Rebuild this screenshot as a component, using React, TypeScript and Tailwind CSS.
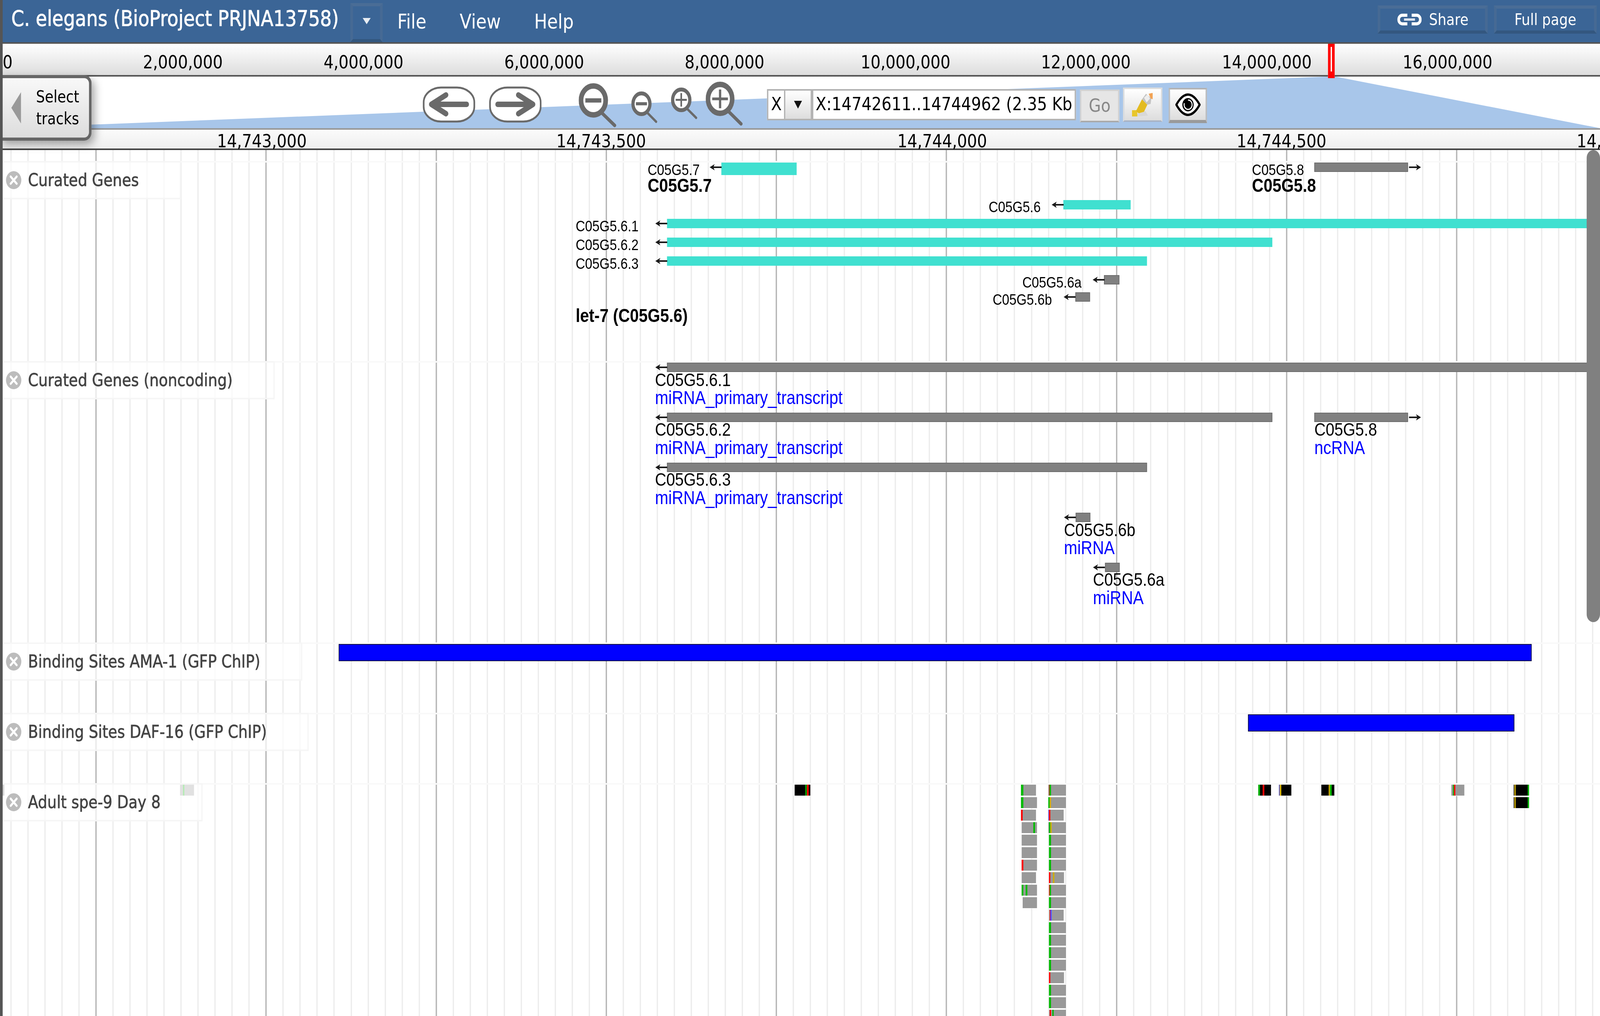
const GRID = Array.from({ length: 94 }, (_, i) => ({ x: 31 + 51.025 * i, major: (i - 5) % 10 === 0 }));

const OVERVIEW = [
  ['0', 8], ['2,000,000', 429], ['4,000,000', 971], ['6,000,000', 1513], ['8,000,000', 2054],
  ['10,000,000', 2582], ['12,000,000', 3123], ['14,000,000', 3666], ['16,000,000', 4208],
] as const;

const DETAIL = [
  ['14,743,000', 651], ['14,743,500', 1669], ['14,744,000', 2692], ['14,744,500', 3710], ['14,745,000', 4730],
] as const;

type Bar = { x: number; y: number; w: number; h: number; kind: 'teal' | 'gray' | 'blue' };
type Arrow = { x: number; y: number; right?: boolean };
type Label = { t: string; x: number; b: number; kind: 'small' | 'bold' | 'name' | 'type' };
type Read = { x: number; y: number; w: number; bg?: string; marks?: [number, number, string][] };

const BAR_CLASS = {
  teal: 'bg-[#40e0d0]',
  gray: 'bg-[#808080] border-2 border-[#6c6c6c]',
  blue: 'bg-[#0000ff] border-2 border-[#101040]',
};

const LABEL_CLASS = {
  small: 'text-[39px] text-black',
  bold: 'text-[48px] font-bold text-black',
  name: 'text-[47px] text-black',
  type: 'text-[48px] text-[#0000ff]',
};
const LABEL_SIZE = { small: 39, bold: 48, name: 47, type: 48 };

const GENE_BARS: Bar[] = [
  { x: 2164, y: 416, w: 226, h: 32, kind: 'teal' },
  { x: 3190, y: 512, w: 202, h: 24, kind: 'teal' },
  { x: 2001, y: 560, w: 2799, h: 24, kind: 'teal' },
  { x: 2001, y: 608, w: 1816, h: 24, kind: 'teal' },
  { x: 2001, y: 656, w: 1440, h: 24, kind: 'teal' },
  { x: 3312, y: 704, w: 46, h: 24, kind: 'gray' },
  { x: 3226, y: 748, w: 44, h: 24, kind: 'gray' },
  { x: 3943, y: 416, w: 281, h: 24, kind: 'gray' },
];
const GENE_ARROWS: Arrow[] = [
  { x: 2129, y: 428 }, { x: 3155, y: 524 }, { x: 1966, y: 572 }, { x: 1966, y: 620 }, { x: 1966, y: 668 },
  { x: 3278, y: 716 }, { x: 3191, y: 760 }, { x: 4227, y: 428, right: true },
];
const GENE_LABELS: Label[] = [
  { t: 'C05G5.7', x: 1943, b: 448, kind: 'small' },
  { t: 'C05G5.7', x: 1943, b: 492, kind: 'bold' },
  { t: 'C05G5.8', x: 3756, b: 448, kind: 'small' },
  { t: 'C05G5.8', x: 3756, b: 492, kind: 'bold' },
  { t: 'C05G5.6', x: 2966, b: 543, kind: 'small' },
  { t: 'C05G5.6.1', x: 1727, b: 592, kind: 'small' },
  { t: 'C05G5.6.2', x: 1727, b: 640, kind: 'small' },
  { t: 'C05G5.6.3', x: 1727, b: 688, kind: 'small' },
  { t: 'C05G5.6a', x: 3067, b: 736, kind: 'small' },
  { t: 'C05G5.6b', x: 2978, b: 780, kind: 'small' },
  { t: 'let-7 (C05G5.6)', x: 1727, b: 825, kind: 'bold' },
];

const NC_BARS: Bar[] = [
  { x: 2001, y: 928, w: 2799, h: 24, kind: 'gray' },
  { x: 2001, y: 1056, w: 1816, h: 24, kind: 'gray' },
  { x: 2001, y: 1184, w: 1440, h: 24, kind: 'gray' },
  { x: 3943, y: 1056, w: 281, h: 24, kind: 'gray' },
  { x: 3227, y: 1312, w: 44, h: 24, kind: 'gray' },
  { x: 3315, y: 1440, w: 44, h: 24, kind: 'gray' },
];
const NC_ARROWS: Arrow[] = [
  { x: 1966, y: 940 }, { x: 1966, y: 1068 }, { x: 1966, y: 1196 }, { x: 4227, y: 1068, right: true },
  { x: 3192, y: 1324 }, { x: 3279, y: 1452 },
];
const NC_LABELS: Label[] = [
  { t: 'C05G5.6.1', x: 1965, b: 988, kind: 'name' },
  { t: 'miRNA_primary_transcript', x: 1965, b: 1035, kind: 'type' },
  { t: 'C05G5.6.2', x: 1965, b: 1115, kind: 'name' },
  { t: 'miRNA_primary_transcript', x: 1965, b: 1163, kind: 'type' },
  { t: 'C05G5.6.3', x: 1965, b: 1243, kind: 'name' },
  { t: 'miRNA_primary_transcript', x: 1965, b: 1291, kind: 'type' },
  { t: 'C05G5.8', x: 3943, b: 1115, kind: 'name' },
  { t: 'ncRNA', x: 3943, b: 1163, kind: 'type' },
  { t: 'C05G5.6b', x: 3192, b: 1372, kind: 'name' },
  { t: 'miRNA', x: 3192, b: 1419, kind: 'type' },
  { t: 'C05G5.6a', x: 3279, b: 1499, kind: 'name' },
  { t: 'miRNA', x: 3279, b: 1547, kind: 'type' },
];

const G = '#00bb00';
const R = '#ff0000';
const Y = '#d2b000';
const B = '#5050ff';
const DR = '#b83000';
const BLACK = '#000000';

const rowY = (n: number) => 2008 + 32 * n;

const READS: Read[] = [
  // left edge + under the label
  { x: 0, y: rowY(0), w: 13, bg: '#777777' },
  { x: 540, y: rowY(0), w: 42, marks: [[549, 553, G]] },
  // top row, black reads
  { x: 2384, y: rowY(0), w: 47, bg: BLACK, marks: [[2416, 2420, G], [2421, 2426, R]] },
  { x: 3775, y: rowY(0), w: 38, bg: BLACK, marks: [[3775, 3780, G], [3788, 3793, R]] },
  { x: 3837, y: rowY(0), w: 37, bg: BLACK, marks: [[3837, 3839, B], [3839, 3844, Y]] },
  { x: 3964, y: rowY(0), w: 39, bg: BLACK, marks: [[3986, 3990, Y], [3990, 3995, G]] },
  { x: 4354, y: rowY(0), w: 39, marks: [[4359, 4362, G], [4362, 4366, R]] },
  { x: 4541, y: rowY(0), w: 46, bg: BLACK, marks: [[4543, 4547, Y], [4583, 4587, G]] },
  { x: 4541, y: rowY(1), w: 46, bg: BLACK, marks: [[4543, 4547, Y], [4583, 4587, G]] },
  // left stack
  { x: 3063, y: rowY(0), w: 45, marks: [[3063, 3070, G]] },
  { x: 3063, y: rowY(1), w: 48, marks: [[3063, 3070, G]] },
  { x: 3063, y: rowY(2), w: 45, marks: [[3063, 3068, R]] },
  { x: 3065, y: rowY(3), w: 46, marks: [[3100, 3105, G]] },
  { x: 3065, y: rowY(4), w: 46 },
  { x: 3065, y: rowY(5), w: 46 },
  { x: 3065, y: rowY(6), w: 46, marks: [[3065, 3070, R]] },
  { x: 3065, y: rowY(7), w: 43 },
  { x: 3065, y: rowY(8), w: 46, marks: [[3065, 3070, G], [3077, 3082, G]] },
  { x: 3068, y: rowY(9), w: 43 },
  // right stack
  { x: 3145, y: rowY(0), w: 53, marks: [[3147, 3149, DR], [3149, 3153, G]] },
  { x: 3145, y: rowY(1), w: 53, marks: [[3145, 3149, G], [3149, 3153, Y]] },
  { x: 3145, y: rowY(2), w: 46, marks: [[3145, 3147, B], [3147, 3151, R]] },
  { x: 3145, y: rowY(3), w: 53, marks: [[3147, 3151, G], [3151, 3155, Y]] },
  { x: 3147, y: rowY(4), w: 51, marks: [[3147, 3153, G]] },
  { x: 3147, y: rowY(5), w: 51, marks: [[3147, 3153, G]] },
  { x: 3147, y: rowY(6), w: 51, marks: [[3147, 3153, G]] },
  { x: 3147, y: rowY(7), w: 45, marks: [[3147, 3151, R], [3159, 3163, Y]] },
  { x: 3147, y: rowY(8), w: 51, marks: [[3147, 3149, R], [3149, 3153, G]] },
  { x: 3147, y: rowY(9), w: 51, marks: [[3147, 3153, G]] },
  { x: 3147, y: rowY(10), w: 44, marks: [[3149, 3151, R], [3151, 3155, B]] },
  { x: 3147, y: rowY(11), w: 51, marks: [[3147, 3153, G]] },
  { x: 3147, y: rowY(12), w: 51, marks: [[3147, 3153, G]] },
  { x: 3147, y: rowY(13), w: 51, marks: [[3147, 3153, G]] },
  { x: 3147, y: rowY(14), w: 51, marks: [[3147, 3153, G]] },
  { x: 3147, y: rowY(15), w: 45, marks: [[3147, 3151, R]] },
  { x: 3147, y: rowY(16), w: 51, marks: [[3147, 3153, G]] },
  { x: 3147, y: rowY(17), w: 51, marks: [[3147, 3153, G]] },
  { x: 3147, y: rowY(18), w: 51, marks: [[3149, 3153, R], [3157, 3161, G]] },
];

function StrandArrow({ a, top }: { a: Arrow; top: number }) {
  return (
    <svg
      viewBox="0 0 36 20"
      className={`absolute w-[36px] h-[20px] blur-[0.6px] ${a.right ? '-scale-x-100' : ''}`}
      style={{ left: a.x, top: a.y - top - 10 }}
    >
      <path d="M0 10 L15 2 L12 8 H36 V12 H12 L15 18 Z" fill="#1a1a1a" />
    </svg>
  );
}

function Feature({ bars, arrows, labels, top }: { bars: Bar[]; arrows: Arrow[]; labels: Label[]; top: number }) {
  return (
    <>
      {bars.map((b, i) => (
        <div
          key={i}
          className={`absolute ${BAR_CLASS[b.kind]}`}
          style={{ left: b.x, top: b.y - top, width: b.w, height: b.h }}
        />
      ))}
      {arrows.map((a, i) => <StrandArrow key={i} a={a} top={top} />)}
      {labels.map((l, i) => (
        <span
          key={i}
          className={`absolute leading-none whitespace-nowrap font-['Liberation_Sans',sans-serif] blur-[0.4px] ${LABEL_CLASS[l.kind]}`}
          style={{ left: l.x, top: l.b - top - LABEL_SIZE[l.kind] * 0.8465 }}
        >
          {l.t}
        </span>
      ))}
    </>
  );
}

function CloseIcon() {
  return (
    <svg viewBox="0 0 48 48" className="w-12 h-12 shrink-0">
      <circle cx="24" cy="24" r="23" fill="#bcbcbc" />
      <path d="M15 15 L33 33 M33 15 L15 33" stroke="#fff" strokeWidth="6" strokeLinecap="round" />
    </svg>
  );
}

function Track({ title, height, children }: { title: string; height?: string; children?: React.ReactNode }) {
  return (
    <div className={`relative border-t-4 border-[#f9f9f9] ${height ?? ''}`}>
      {children}
      <div className="absolute left-0 top-[-4px] z-10 h-[98px] flex items-center pl-[17px] pr-[122px] bg-white/70 border-4 border-l-0 border-[#f4f4f4]/80">
        <CloseIcon />
        <span className="ml-[19px] text-[44.5px] leading-none whitespace-nowrap text-[#444] [-webkit-text-stroke:0.9px_#444]">
          {title}
        </span>
      </div>
    </div>
  );
}

function NavButton({ right, className }: { right?: boolean; className: string }) {
  return (
    <svg viewBox="0 0 158 93" preserveAspectRatio="none" className={`w-[158px] h-[93px] shrink-0 ${right ? '-scale-x-100' : ''} ${className}`}>
      <rect x="3" y="3" width="152" height="87" rx="52" ry="38" fill="#fff" stroke="#6a6a6a" strokeWidth="5" />
      <path d="M26 46 H132 M26 46 L70 22 M26 46 L70 70" fill="none" stroke="#6a6a6a" strokeWidth="14" strokeLinecap="round" strokeLinejoin="round" />
    </svg>
  );
}

function Magnifier({ plus, className }: { plus?: boolean; className: string }) {
  return (
    <svg viewBox="0 0 116 113" preserveAspectRatio="none" className={`shrink-0 ${className}`}>
      <path d="M72 78 L108 108" stroke="#6a6a6a" strokeWidth="9" strokeLinecap="round" />
      <circle cx="44" cy="44" r="37" fill="#fff" stroke="#6a6a6a" strokeWidth="14" />
      <path d={plus ? 'M20 44 H68 M44 20 V68' : 'M20 44 H68'} stroke="#6a6a6a" strokeWidth={plus ? 7 : 11} />
    </svg>
  );
}

function LinkIcon() {
  return (
    <svg viewBox="0 0 73 30" className="w-[73px] h-[30px] shrink-0 blur-[0.5px]">
      <path
        d="M30 4 H15 a11 11 0 0 0 0 22 H30 M43 4 H58 a11 11 0 0 1 0 22 H43"
        fill="none"
        stroke="#fff"
        strokeWidth="8"
      />
      <path d="M20 15 H53" stroke="#dbe3ee" strokeWidth="6" />
    </svg>
  );
}

const BEVEL = 'border-8 border-t-[#4a6d96] border-l-[#466a94] border-r-[#466a94] border-b-[#33577f] bg-[#3b6596]';

export default function App() {
  // the layout is drawn in 4800 wide coordinates; narrower windows squeeze it instead of cutting it off
  const fit = Math.min(1, window.innerWidth / 4800);

  return (
    <div className="w-full h-[2600px] overflow-hidden">
      <div
        className="relative w-[4800px] h-[2600px] origin-top-left overflow-hidden bg-white flex flex-col font-['DejaVu_Sans',sans-serif]"
        style={{ transform: `scaleX(${fit})` }}
      >
        <div className="absolute left-0 inset-y-0 w-2 z-40 bg-[#555]" />

        {/* title bar */}
        <header className="h-[112px] shrink-0 border-b-4 border-[#555] bg-[#3b6596] flex items-start text-white">
          <h1 className="ml-[34px] mt-[20px] w-[1017px] shrink-0 text-[55px] leading-none whitespace-nowrap font-normal [-webkit-text-stroke:1px_#fff]">
            C. elegans (BioProject PRJNA13758)
          </h1>
          <div className={`mt-2 w-[97px] h-[100px] shrink-0 flex items-center justify-center ${BEVEL}`}>
            <div className="w-0 h-0 border-x-[12px] border-x-transparent border-t-[16px] border-t-[#e8edf3] mb-2" />
          </div>
          <div className="mt-[29px] flex gap-[100px] ml-[44px] text-[52px] leading-none">
            <span>File</span>
            <span>View</span>
            <span>Help</span>
          </div>
          <div className="ml-auto mr-[10px] mt-[14px] flex gap-[19px] text-[41px] leading-none">
            <div className={`w-[330px] h-[72px] flex items-center pl-[51px] gap-[22px] ${BEVEL}`}>
              <LinkIcon />
              <span>Share</span>
            </div>
            <div className={`w-[308px] h-[72px] flex items-center justify-center ${BEVEL}`}>
              <span>Full page</span>
            </div>
          </div>
        </header>

        {/* whole chromosome overview */}
        <div className="relative z-20 h-[84px] shrink-0 border-b-4 border-[#555] bg-gradient-to-b from-white to-[#dddddd]">
          {OVERVIEW.map(([t, x]) => (
            <span key={t} className="absolute top-[23px] text-[47px] leading-none text-black" style={{ left: x }}>
              {t}
            </span>
          ))}
          <div className="absolute left-[3984px] top-0 w-[20px] h-[88px] bg-white border-x-8 border-t-8 border-b-[17px] border-[#ff0000]" />
        </div>

        {/* zoom strip with nav toolbar */}
        <div className="relative h-[136px] shrink-0 border-b-4 border-[#999]">
          <svg viewBox="0 0 4800 132" preserveAspectRatio="none" className="absolute inset-0 w-full h-[132px]">
            <polygon points="0,132 3986,0 4006,0 4800,132" fill="#a8c6ea" />
          </svg>
          <div className="absolute inset-0 flex items-start">
            <NavButton className="ml-[1268px] mt-[25px]" />
            <NavButton right className="ml-[41px] mt-[25px]" />
            <Magnifier className="ml-[111px] mt-[17px] w-[116px] h-[113px]" />
            <Magnifier className="ml-[42px] mt-[38px] w-[80px] h-[81px]" />
            <Magnifier plus className="ml-[39px] mt-[28px] w-[81px] h-[81px]" />
            <Magnifier plus className="ml-[23px] mt-[13px] w-[114px] h-[113px]" />

            <div className="ml-[70px] mt-[32px] w-[927px] h-[80px] shrink-0 flex border-4 border-[#b3b3b3] bg-white">
              <span className="w-[47px] pl-[8px] pt-[10px] text-[47px] leading-none text-black">X</span>
              <div className="w-[88px] h-full shrink-0 border-l-4 border-r-8 border-[#b3b3b3] bg-gradient-to-b from-white to-[#dddddd] flex items-center justify-center">
                <div className="w-0 h-0 border-x-[12px] border-x-transparent border-t-[20px] border-t-[#111]" />
              </div>
              <span className="ml-[7px] pt-[10px] text-[47px] leading-none whitespace-nowrap text-black">X:14742611..14744962 (2.35 Kb</span>
            </div>

            <div className="ml-[12px] mt-[33px] w-[118px] h-[84px] shrink-0 flex items-center justify-center pb-1 bg-[#e6e6e6] border-4 border-[#d2d2d2] border-b-[#aaa] text-[47px] leading-none text-[#888]">
              Go
            </div>

            <div className="ml-[11px] mt-[28px] w-[118px] h-[88px] shrink-0 flex items-center justify-center bg-gradient-to-b from-white to-[#dddddd] border-4 border-[#ddd] border-b-[#a9b4c6]">
              <svg viewBox="0 0 64 60" className="w-[64px] h-[60px] blur-[0.5px]">
                <polygon points="16,54 40,46 48,58 16,60" fill="#d8d8d8" />
                <polygon points="0,44 16,44 16,60 0,60" fill="#e8c72c" />
                <polygon points="12,46 30,16 46,30 36,48 20,52" fill="#e3bb20" />
                <polygon points="30,16 42,2 58,14 56,28 46,30" fill="#c4c4c4" />
                <polygon points="36,12 46,4 54,14 44,24" fill="#eeeeee" />
                <polygon points="50,2 60,0 62,0 62,16 56,14" fill="#f2a355" />
              </svg>
            </div>

            <div className="ml-[19px] mt-[29px] w-[115px] h-[90px] shrink-0 flex items-center justify-center bg-gradient-to-b from-white to-[#dddddd] border-4 border-[#bdbdbd] border-t-[#b3b3b3] border-b-8 border-b-[#9a9a9a]">
              <svg viewBox="0 0 76 60" className="w-[76px] h-[60px]">
                <path d="M3 30 Q20 4 38 4 Q56 4 73 30 Q56 56 38 56 Q20 56 3 30 Z" fill="#fff" stroke="#000" strokeWidth="6" />
                <circle cx="38" cy="30" r="17" fill="#000" />
                <path d="M38 18 A12 12 0 1 1 27 26" fill="none" stroke="#fff" strokeWidth="3" />
                <circle cx="38" cy="28" r="6" fill="#000" />
              </svg>
            </div>
          </div>
        </div>

        {/* detail ruler */}
        <div className="relative z-20 h-[52px] shrink-0 border-b-4 border-[#444] bg-gradient-to-b from-[#fbfbfb] to-[#eeeeee]">
          {DETAIL.map(([t, x]) => (
            <span key={t} className="absolute top-[5px] text-[47px] leading-none whitespace-nowrap text-black" style={{ left: x }}>
              {t}
            </span>
          ))}
        </div>

        {/* tracks */}
        <div className="relative flex-1 flex flex-col">
          {GRID.map((g) => (
            <div
              key={g.x}
              className={`absolute inset-y-0 w-1 ${g.major ? 'bg-[#b6b6b6]' : 'bg-[#ededed]'}`}
              style={{ left: g.x }}
            />
          ))}
          <div className="h-[28px] shrink-0" />
          <Track title="Curated Genes" height="h-[512px] shrink-0">
            <Feature bars={GENE_BARS} arrows={GENE_ARROWS} labels={GENE_LABELS} top={416} />
          </Track>
          <Track title="Curated Genes (noncoding)" height="h-[720px] shrink-0">
            <Feature bars={NC_BARS} arrows={NC_ARROWS} labels={NC_LABELS} top={928} />
          </Track>
          <Track title="Binding Sites AMA-1 (GFP ChIP)" height="h-[180px] shrink-0">
            <Feature bars={[{ x: 1016, y: 1648, w: 3579, h: 44, kind: 'blue' }]} arrows={[]} labels={[]} top={1648} />
          </Track>
          <Track title="Binding Sites DAF-16 (GFP ChIP)" height="h-[180px] shrink-0">
            <Feature bars={[{ x: 3744, y: 1828, w: 799, h: 44, kind: 'blue' }]} arrows={[]} labels={[]} top={1828} />
          </Track>
          <Track title="Adult spe-9 Day 8" height="flex-1">
            {READS.map((r, i) => (
              <div
                key={i}
                className="absolute h-[28px] blur-[0.5px] ring-1 ring-white"
                style={{ left: r.x, top: r.y - 2008, width: r.w, backgroundColor: r.bg ?? '#999999' }}
              >
                {r.marks?.map(([a, b, c], j) => (
                  <div key={j} className="absolute inset-y-0" style={{ left: a - r.x, width: b - a, backgroundColor: c }} />
                ))}
              </div>
            ))}
          </Track>

          {/* scroll thumb */}
          <div className="absolute right-0 top-0 z-30 w-[40px] h-[1208px] rounded-full bg-[#808080]" />
        </div>

        {/* slide-out track selector tab */}
        <div className="absolute left-0 top-[192px] z-30 w-[275px] h-[168px] flex items-center pl-[34px] rounded-r-[22px] border-y-8 border-r-8 border-[#666] bg-gradient-to-b from-[#f8f8f8] to-[#dddddd] shadow-[8px_10px_24px_rgba(0,0,0,0.35)]">
          <div className="w-0 h-0 border-y-[40px] border-y-transparent border-r-[29px] border-r-[#999]" />
          <div className="ml-[45px] text-[42px] leading-[56px] text-center text-black">
            <div>Select</div>
            <div>tracks</div>
          </div>
        </div>
      </div>
    </div>
  );
}
